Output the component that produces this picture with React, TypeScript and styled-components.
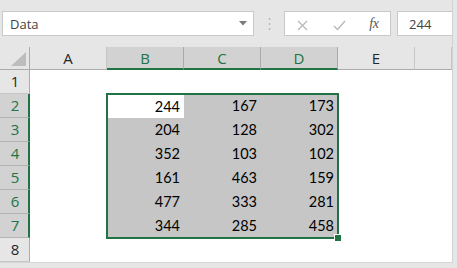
import React from "react";
import styled, { createGlobalStyle } from "styled-components";

const GREEN = "#217346";

const GlobalStyle = createGlobalStyle`
  html, body {
    margin: 0;
    padding: 0;
    background: #e6e6e6;
    width: 457px;
    height: 268px;
    overflow: hidden;
  }
  * { box-sizing: border-box; }
`;

const Page = styled.div`
  width: 453px;
  display: flex;
  flex-direction: column;
  border-right: 1px solid #d2d2d2;
`;

const Toolbar = styled.div`
  height: 47px;
  display: flex;
  align-items: flex-start;
  padding: 11px 0 0 2px;
  background: #e6e6e6;
`;

const Box = styled.div<{ $w: number }>`
  width: ${(p) => p.$w}px;
  height: 25px;
  background: #fff;
  border: 1px solid #c9c9c9;
  display: flex;
  align-items: center;
  font-family: "Open Sans", "Noto Sans", sans-serif;
  font-size: 13px;
  color: #444;
`;

const NameBox = styled(Box)`
  justify-content: space-between;
  padding: 0 6px 0 7px;
`;

const Grip = styled.div`
  width: 30px;
  height: 25px;
  display: flex;
  align-items: center;
  justify-content: center;
`;

const FormulaBox = styled(Box)`
  padding-left: 12px;
  gap: 25px;
`;

const Fx = styled.span`
  font-family: "Liberation Serif", serif;
  font-style: italic;
  font-size: 14px;
  color: #555;
  margin-left: -2px;
  letter-spacing: -0.5px;
`;

const ValueBox = styled(Box)`
  margin-left: 6px;
  padding-left: 11px;
  border-right: none;
`;

const Sheet = styled.div`
  display: grid;
  grid-template-columns: 30px repeat(5, 77px) 37px;
  grid-template-rows: 23px repeat(8, 24px);
  background: #fff;
  border-bottom: 1px solid #d6d6d6;
`;

const Corner = styled.div`
  background: #e6e6e6;
  border-right: 1px solid #ababab;
  border-bottom: 1px solid #ababab;
  display: flex;
  align-items: flex-end;
  justify-content: flex-end;
  padding: 0 3px 3px 0;
`;

const ColHeader = styled.div<{ $sel?: boolean }>`
  background: ${(p) => (p.$sel ? "#d2d2d2" : "#e6e6e6")};
  color: ${(p) => (p.$sel ? GREEN : "#262626")};
  border-right: 1px solid ${(p) => (p.$sel ? "#ababab" : "#c6c6c6")};
  border-bottom: ${(p) => (p.$sel ? `2px solid ${GREEN}` : "1px solid #ababab")};
  font-family: "Open Sans", "Noto Sans", sans-serif;
  font-size: 15px;
  line-height: 22px;
  text-align: center;
`;

const RowHeader = styled.div<{ $sel?: boolean }>`
  background: ${(p) => (p.$sel ? "#d2d2d2" : "#e6e6e6")};
  color: ${(p) => (p.$sel ? GREEN : "#262626")};
  border-right: ${(p) => (p.$sel ? `2px solid ${GREEN}` : "1px solid #ababab")};
  border-bottom: 1px solid ${(p) => (p.$sel ? "#b4b4b4" : "#c6c6c6")};
  font-family: "Open Sans", "Noto Sans", sans-serif;
  font-size: 15px;
  line-height: 23px;
  text-align: center;
  padding-left: ${(p) => (p.$sel ? 2 : 1)}px;
`;

const Cell = styled.div`
  background: #fff;
`;

const Range = styled.div`
  grid-column: 3 / 6;
  grid-row: 3 / 9;
  display: grid;
  grid-template-columns: repeat(3, 77px);
  grid-template-rows: repeat(6, 24px);
  background: #c6c6c6;
  outline: 2px solid ${GREEN};
  outline-offset: -1px;
  position: relative;
  z-index: 1;
`;

const NumCell = styled.div<{ $active?: boolean }>`
  background: ${(p) => (p.$active ? "#fff" : "transparent")};
  margin: ${(p) => (p.$active ? "1px 0 0 1px" : "0")};
  font-family: Lato, "Open Sans", sans-serif;
  font-size: 14.5px;
  line-height: 24px;
  color: #000;
  text-align: right;
  padding-right: 4px;
`;

const FillHandle = styled.div`
  position: absolute;
  right: -3px;
  bottom: -3px;
  width: 6px;
  height: 6px;
  background: ${GREEN};
  box-shadow: 0 0 0 1px #fff;
`;

const cols = ["A", "B", "C", "D", "E", ""];
const data = [
  [244, 167, 173],
  [204, 128, 302],
  [352, 103, 102],
  [161, 463, 159],
  [477, 333, 281],
  [344, 285, 458],
];

export default function App() {
  const rows = [1, 2, 3, 4, 5, 6, 7, 8];
  return (
    <>
      <GlobalStyle />
      <Page>
        <Toolbar>
          <NameBox $w={253}>
            <span>Data</span>
            <svg width="8" height="5" viewBox="0 0 8 5">
              <polygon points="0,0 8,0 4,4.5" fill="#7a7a7a" />
            </svg>
          </NameBox>
          <Grip>
            <svg width="3" height="14" viewBox="0 0 3 14">
              <circle cx="1.5" cy="2" r="1" fill="#b5b5b5" />
              <circle cx="1.5" cy="7" r="1" fill="#b5b5b5" />
              <circle cx="1.5" cy="12" r="1" fill="#b5b5b5" />
            </svg>
          </Grip>
          <FormulaBox $w={107}>
            <svg width="11" height="11" viewBox="0 0 11 11" style={{ marginTop: 3 }}>
              <path d="M1 1 L10 10 M10 1 L1 10" stroke="#b8b8b8" strokeWidth="1.3" fill="none" />
            </svg>
            <svg width="13" height="11" viewBox="0 0 13 11" style={{ marginTop: 3 }}>
              <path d="M1 6 L4.5 9.5 L12 1" stroke="#b8b8b8" strokeWidth="1.4" fill="none" />
            </svg>
            <Fx>fx</Fx>
          </FormulaBox>
          <ValueBox $w={55}>244</ValueBox>
        </Toolbar>
        <Sheet>
          <Corner>
            <svg width="15" height="14" viewBox="0 0 15 14">
              <polygon points="15,0 15,14 0,14" fill="#bdbdbd" />
            </svg>
          </Corner>
          {cols.map((c, i) => (
            <ColHeader key={i} $sel={i >= 1 && i <= 3}>
              {c}
            </ColHeader>
          ))}
          {rows.map((r) => {
            const sel = r >= 2 && r <= 7;
            return (
              <React.Fragment key={r}>
                <RowHeader $sel={sel}>{r}</RowHeader>
                {sel
                  ? [0, 1, 2].map((k) => <Cell key={k} />)
                  : [0, 1, 2, 3, 4, 5].map((k) => <Cell key={k} />)}
              </React.Fragment>
            );
          })}
          <Range>
            {data.map((row, ri) =>
              row.map((v, ci) => (
                <NumCell key={`${ri}-${ci}`} $active={ri === 0 && ci === 0}>
                  {v}
                </NumCell>
              ))
            )}
            <FillHandle />
          </Range>
        </Sheet>
      </Page>
    </>
  );
}
